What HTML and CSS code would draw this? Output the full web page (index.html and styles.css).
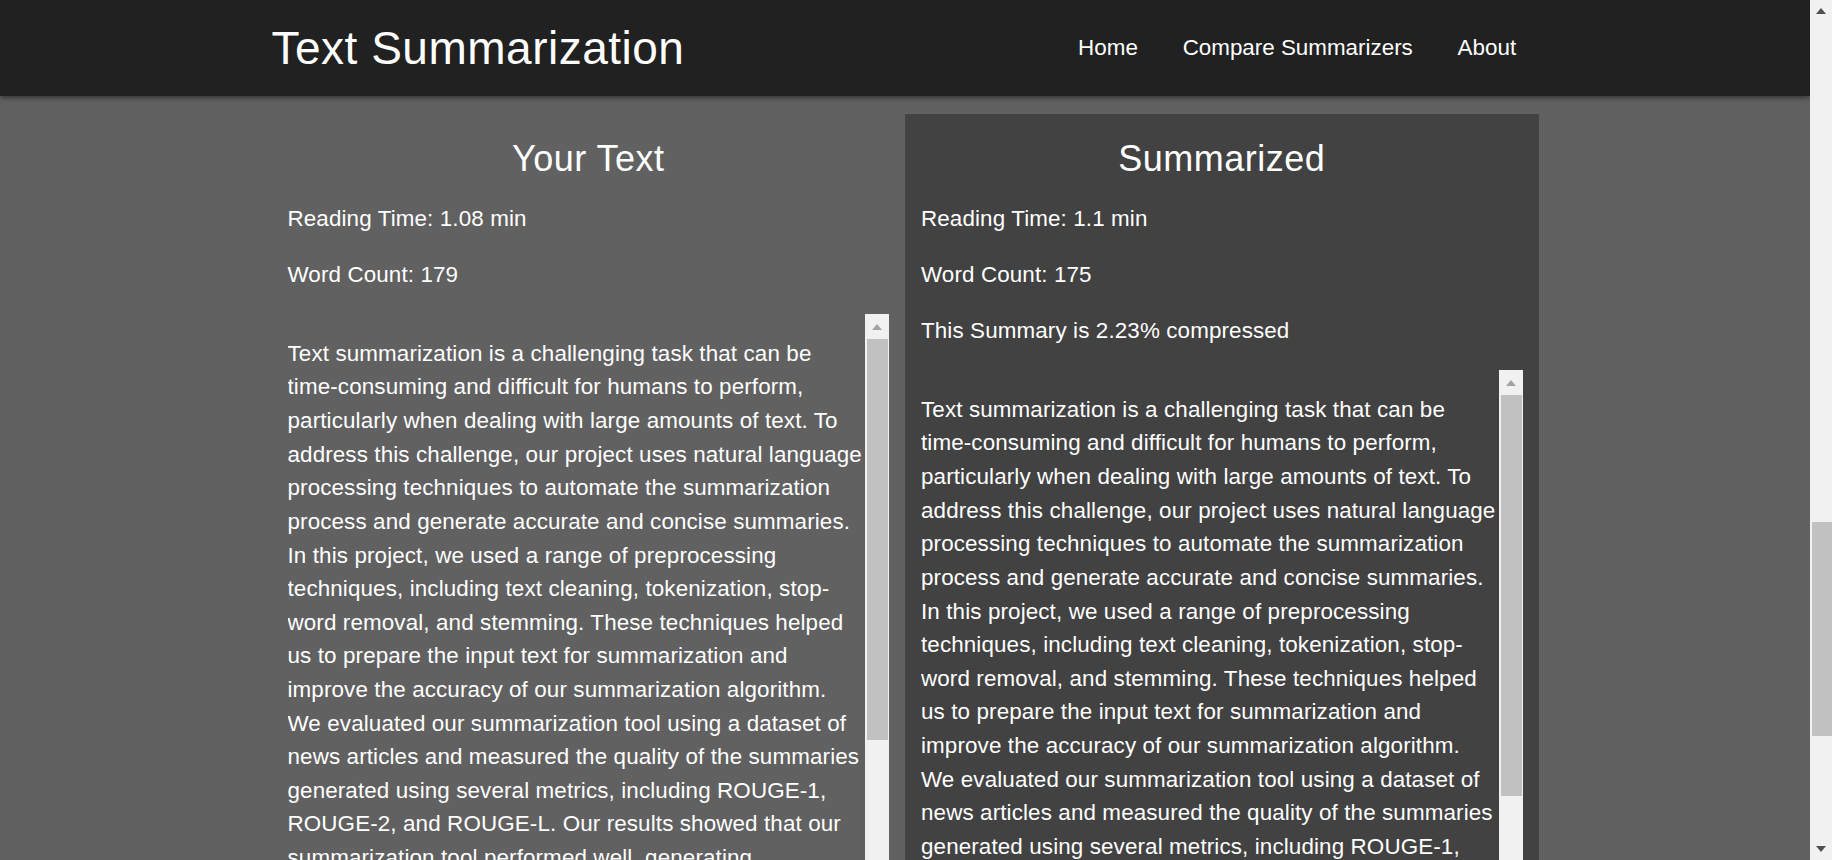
FILE: index.html
```html
<!DOCTYPE html>
<html lang="en">
<head>
    <meta charset="UTF-8">
    <meta name="viewport" content="width=device-width, initial-scale=1.0">
    <title>Text Summarization</title>
    <link rel="stylesheet" href="styles.css">
</head>
<body>
    <div class="page">
        <header class="navbar">
            <div class="container nav-inner">
                <a class="brand" href="#">Text Summarization</a>
                <nav class="nav-links">
                    <a href="#">Home</a>
                    <a href="#">Compare Summarizers</a>
                    <a href="#">About</a>
                </nav>
            </div>
        </header>

        <main class="container results">
            <section class="panel">
                <h1 class="panel-title">Your Text</h1>
                <p>Reading Time: 1.08 min</p>
                <p>Word Count: 179</p>
                <div class="text-box">
                    <div class="text-content">
                        <p>Text summarization is a challenging task that can be time-consuming and difficult for humans to perform, particularly when dealing with large amounts of text. To address this challenge, our project uses natural language processing techniques to automate the summarization process and generate accurate and concise summaries. In this project, we used a range of preprocessing techniques, including text cleaning, tokenization, stop-word removal, and stemming. These techniques helped us to prepare the input text for summarization and improve the accuracy of our summarization algorithm. We evaluated our summarization tool using a dataset of news articles and measured the quality of the summaries generated using several metrics, including ROUGE-1, ROUGE-2, and ROUGE-L. Our results showed that our summarization tool performed well, generating summaries that were both accurate and concise. We also compared our tool with several existing summarization tools and found that it performed competitively, achieving high scores on all evaluation metrics. Overall, our project demonstrates the potential of natural language processing techniques to automate text summarization and improve the speed and efficiency of information processing in various domains and real-world applications.</p>
                    </div>
                    <div class="scrollbar">
                        <span class="sb-btn sb-up"></span>
                        <span class="sb-thumb"></span>
                        <span class="sb-btn sb-down"></span>
                    </div>
                </div>
            </section>

            <section class="panel summary">
                <h1 class="panel-title">Summarized</h1>
                <p>Reading Time: 1.1 min</p>
                <p>Word Count: 175</p>
                <p>This Summary is 2.23% compressed</p>
                <div class="text-box">
                    <div class="text-content">
                        <p>Text summarization is a challenging task that can be time-consuming and difficult for humans to perform, particularly when dealing with large amounts of text. To address this challenge, our project uses natural language processing techniques to automate the summarization process and generate accurate and concise summaries. In this project, we used a range of preprocessing techniques, including text cleaning, tokenization, stop-word removal, and stemming. These techniques helped us to prepare the input text for summarization and improve the accuracy of our summarization algorithm. We evaluated our summarization tool using a dataset of news articles and measured the quality of the summaries generated using several metrics, including ROUGE-1, ROUGE-2, and ROUGE-L. Our results showed that our summarization tool performed well, generating summaries that were both accurate and concise. We also compared our tool with several existing summarization tools and found that it performed competitively, achieving high scores on all evaluation metrics. Overall, our project demonstrates the potential of natural language processing techniques to automate text summarization and improve the efficiency of information processing in various domains.</p>
                    </div>
                    <div class="scrollbar">
                        <span class="sb-btn sb-up"></span>
                        <span class="sb-thumb"></span>
                        <span class="sb-btn sb-down"></span>
                    </div>
                </div>
            </section>
        </main>
    </div>

    <div class="page-scrollbar">
        <span class="psb-btn psb-up"></span>
        <span class="psb-thumb"></span>
        <span class="psb-btn psb-down"></span>
    </div>
</body>
</html>
```

FILE: styles.css
```css
* {
    box-sizing: border-box;
}

html,
body {
    height: 100%;
}

body {
    margin: 0;
    display: flex;
    overflow: hidden;
    background-color: #616161;
    color: #fff;
    font-family: "Liberation Sans", Arial, sans-serif;
}

a {
    color: #fff;
    text-decoration: none;
}

.page {
    flex: 1;
    min-width: 0;
    overflow: hidden;
}

.container {
    width: 70%;
    margin: 0 auto;
}

/* header */
.navbar {
    position: relative;
    background-color: #212121;
    box-shadow: 0 2px 5px rgba(0, 0, 0, 0.45);
}

.nav-inner {
    display: flex;
    justify-content: space-between;
    align-items: center;
    height: 96px;
}

.brand {
    font-size: 46px;
    letter-spacing: 0.5px;
}

.nav-links {
    display: flex;
}

.nav-links a {
    font-size: 1.4rem;
    padding: 0 1em;
}

/* result columns */
.results {
    display: grid;
    grid-template-columns: 1fr 1fr;
    padding: 18px 0 40px;
}

.panel {
    padding: 0 16px 30px;
}

.summary {
    background-color: #424242;
}

.panel-title {
    font-size: 36px;
    font-weight: normal;
    letter-spacing: 0.5px;
    text-align: center;
    margin: 24px 0 22px;
}

.panel p {
    font-size: 1.4rem;
    line-height: 1.5;
    letter-spacing: 0.12px;
    margin: 1em 0;
}

.text-box {
    display: flex;
    height: 610px;
}

.text-content {
    flex: 1;
    min-width: 0;
    overflow: hidden;
    padding-top: 0.1px;
}

/* box scrollbar */
.scrollbar {
    width: 24px;
    display: flex;
    flex-direction: column;
    background-color: #f1f1f1;
}

.sb-btn {
    height: 25px;
    display: flex;
    align-items: center;
    justify-content: center;
}

.sb-up::before,
.sb-down::before {
    content: "";
    border-left: 5px solid transparent;
    border-right: 5px solid transparent;
}

.sb-up::before {
    border-bottom: 6px solid #a3a3a3;
}

.sb-down {
    margin-top: auto;
}

.sb-down::before {
    border-top: 6px solid #a3a3a3;
}

.sb-thumb {
    height: 401px;
    margin: 0 1px 0 2px;
    background-color: #c1c1c1;
}

/* page scrollbar */
.page-scrollbar {
    width: 22px;
    flex-shrink: 0;
    display: flex;
    flex-direction: column;
    background-color: #f1f1f1;
}

.psb-btn {
    height: 22px;
    display: flex;
    align-items: center;
    justify-content: center;
}

.psb-up::before,
.psb-down::before {
    content: "";
    border-left: 5.5px solid transparent;
    border-right: 5.5px solid transparent;
}

.psb-up::before {
    border-bottom: 6px solid #505050;
}

.psb-down {
    margin-top: auto;
}

.psb-down::before {
    border-top: 6px solid #505050;
}

.psb-thumb {
    height: 214px;
    margin: 500px 0 0 2px;
    background-color: #c1c1c1;
}
```
